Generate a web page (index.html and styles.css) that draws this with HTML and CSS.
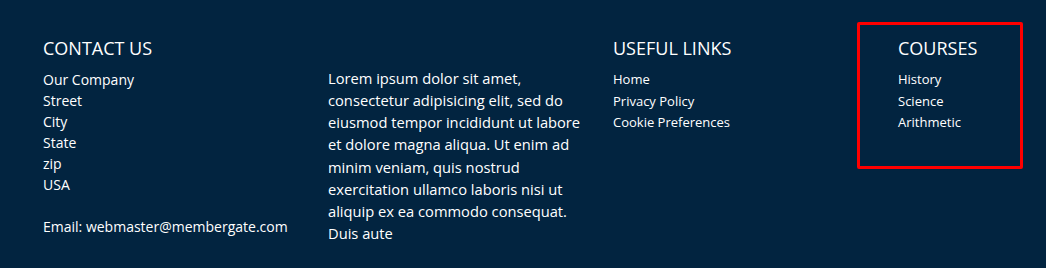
FILE: index.html
```html
<!DOCTYPE html>
<html lang="en">
  <head>
    <meta charset="UTF-8" />
    <meta name="viewport" content="width=device-width, initial-scale=1.0" />
    <title>Footer</title>
    <link rel="stylesheet" href="styles.css">
  </head>
  <body>
    <!-- page footer -->
    <footer class="footer">
      <div class="col">
        <h3 class="title">CONTACT US</h3>
        <ul class="lines">
          <li>Our Company</li>
          <li>Street</li>
          <li>City</li>
          <li>State</li>
          <li>zip</li>
          <li>USA</li>
          <li class="gap">Email: webmaster@membergate.com</li>
        </ul>
      </div>

      <div class="col">
        <p class="about">
          Lorem ipsum dolor sit amet, consectetur adipisicing elit, sed do
          eiusmod tempor incididunt ut labore et dolore magna aliqua. Ut enim
          ad minim veniam, quis nostrud exercitation ullamco laboris nisi ut
          aliquip ex ea commodo consequat. Duis aute
        </p>
      </div>

      <div class="col">
        <h3 class="title">USEFUL LINKS</h3>
        <ul class="links">
          <li><a href="#">Home</a></li>
          <li><a href="#">Privacy Policy</a></li>
          <li><a href="#">Cookie Preferences</a></li>
        </ul>
      </div>

      <div class="col courses">
        <h3 class="title">COURSES</h3>
        <ul class="links">
          <li><a href="#">History</a></li>
          <li><a href="#">Science</a></li>
          <li><a href="#">Arithmetic</a></li>
        </ul>
        <!-- highlight box -->
        <div class="mark"></div>
      </div>
    </footer>
  </body>
</html>
```

FILE: styles.css
```css
* {
  padding: 0;
  margin: 0;
}

body {
  height: 268px;
  overflow: hidden;

  font-family: "Open Sans", "Liberation Sans", sans-serif;
  color: #fff;

  background-color: #022440;
}

.footer {
  display: grid;
  grid-template-columns: 285px 285px 285px 148px;
  padding: 36px 0 0 43px;
}

.footer .col {
  position: relative;
}

.footer .title {
  margin-bottom: 9px;

  font-size: 18px;
  font-weight: 400;
  line-height: 24px;
}

.footer .lines,
.footer .links {
  list-style: none;
}

.footer .lines li {
  font-size: 14px;
  line-height: 21px;
}

.footer .lines .gap {
  margin-top: 21px;
}

.footer .links li {
  font-size: 13px;
  line-height: 21.5px;
}

.footer .links a {
  color: #fff;
  text-decoration: none;
}

.footer .about {
  width: 256px;
  margin-top: 31px;

  font-size: 14.7px;
  line-height: 22.15px;
}

.footer .courses .mark {
  position: absolute;
  top: -14px;
  left: -41px;

  width: 160px;
  height: 141px;
  border: 3px solid #f00;
  border-radius: 2px;
}
```
